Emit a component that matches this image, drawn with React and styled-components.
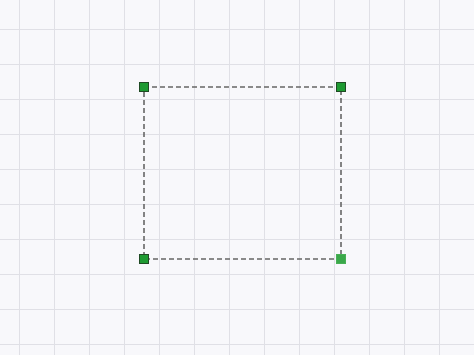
import React from "react";
import styled, { createGlobalStyle } from "styled-components";

const Global = createGlobalStyle`
  html, body { margin: 0; padding: 0; }
  body { font-family: "Liberation Sans", Arial, sans-serif; background: #f8f8fb; }
`;

const Canvas = styled.div`
  position: relative;
  width: 474px;
  height: 355px;
  overflow: hidden;
  background-color: #f8f8fb;
  background-image:
    linear-gradient(to right, #e0e0e6 1px, transparent 1px),
    linear-gradient(to bottom, #e0e0e6 1px, transparent 1px);
  background-size: 35px 35px;
  background-position: 19px 29px;
`;

const Drawing = styled.svg`
  position: absolute;
  inset: 0;
  width: 474px;
  height: 355px;
`;

const rect = { x1: 144, y1: 87, x2: 341, y2: 259 };

function Handle({ x, y, active }) {
  return (
    <rect
      x={x - 4.5}
      y={y - 4.5}
      width={9}
      height={9}
      fill={active ? "#3aa84a" : "#1e9a32"}
      stroke={active ? "#48b056" : "#1f4a24"}
      strokeWidth={1}
    />
  );
}

export default function App() {
  const { x1, y1, x2, y2 } = rect;
  return (
    <>
      <Global />
      <Canvas>
        <Drawing viewBox="0 0 474 355">
          <rect
            x={x1}
            y={y1}
            width={x2 - x1}
            height={y2 - y1}
            fill="none"
            stroke="#666666"
            strokeWidth={1.6}
            strokeDasharray="5 3"
          />
          <Handle x={x1} y={y1} />
          <Handle x={x2} y={y1} />
          <Handle x={x1} y={y2} />
          <Handle x={x2} y={y2} active />
        </Drawing>
      </Canvas>
    </>
  );
}
